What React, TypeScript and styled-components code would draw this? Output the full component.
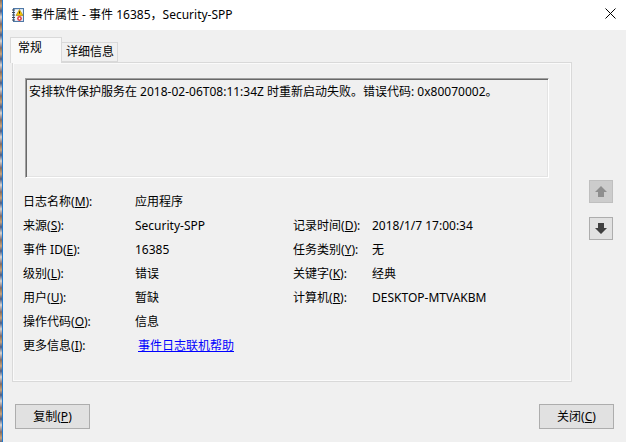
import styled, { createGlobalStyle } from 'styled-components';

const GlobalStyle = createGlobalStyle`
  html, body {
    margin: 0;
    padding: 0;
  }
  body {
    background: #f0f0f0;
    font-family: "Noto Sans", "Noto Sans CJK SC", sans-serif;
    font-size: 12px;
    color: #000;
  }
`;

type Field = {
  label: string;
  key: string;
  value?: string;
  link?: boolean;
};

const leftFields: Field[] = [
  { label: '日志名称', key: 'M', value: '应用程序' },
  { label: '来源', key: 'S', value: 'Security-SPP' },
  { label: '事件 ID', key: 'E', value: '16385' },
  { label: '级别', key: 'L', value: '错误' },
  { label: '用户', key: 'U', value: '暂缺' },
  { label: '操作代码', key: 'O', value: '信息' },
  { label: '更多信息', key: 'I', value: '事件日志联机帮助', link: true },
];

const rightFields: (Field | null)[] = [
  null,
  { label: '记录时间', key: 'D', value: '2018/1/7 17:00:34' },
  { label: '任务类别', key: 'Y', value: '无' },
  { label: '关键字', key: 'K', value: '经典' },
  { label: '计算机', key: 'R', value: 'DESKTOP-MTVAKBM' },
  null,
  null,
];

const Label = ({ f }: { f: Field }) => (
  <>
    {f.label}(<u>{f.key}</u>):
  </>
);

// notebook with a warning triangle and a red badge
const EventIcon = () => (
  <svg width="12" height="14" viewBox="0 0 12 14">
    <rect x="1.5" y="0.5" width="10" height="13" fill="#cfdff0" stroke="#4f78a6" />
    <rect x="3" y="2" width="7.5" height="10.5" fill="#f4f8fc" />
    <path d="M0 2h3M0 4.5h3M0 7h3M0 9.5h3M0 12h3" stroke="#3b4552" strokeWidth="1" />
    <path d="M7.5 1.5 L11 7.5 H4 Z" fill="#f5c400" stroke="#a07a00" strokeWidth="0.6" />
    <path d="M7.5 3.3v2.3" stroke="#3a2a00" strokeWidth="1" />
    <circle cx="7.5" cy="10.5" r="2.4" fill="#e0393e" />
    <circle cx="7.5" cy="10.5" r="0.9" fill="#ffffff" />
  </svg>
);

const CloseIcon = () => (
  <svg width="11" height="11" viewBox="0 0 11 11">
    <path d="M0.5 0.5 L10.5 10.5 M10.5 0.5 L0.5 10.5" stroke="#000" strokeWidth="1" />
  </svg>
);

const Arrow = ({ down, color }: { down?: boolean; color: string }) => (
  <svg width="12" height="11" viewBox="0 0 12 11" style={down ? { transform: 'rotate(180deg)' } : undefined}>
    <path d="M6 0 L12 6 H9 V11 H3 V6 H0 Z" fill={color} />
  </svg>
);

const App = () => {
  return (
    <Screen>
      <GlobalStyle />
      <BehindStrip />
      <Window>
        <TitleBar>
          <EventIcon />
          <Title>事件属性 - 事件 16385，Security-SPP</Title>
          <CloseButton>
            <CloseIcon />
          </CloseButton>
        </TitleBar>
        <Body>
          <TabControl>
            <TabStrip>
              <Tab $active>常规</Tab>
              <Tab>详细信息</Tab>
            </TabStrip>
            <TabPanel>
              <Description>
                安排软件保护服务在 2018-02-06T08:11:34Z 时重新启动失败。错误代码: 0x80070002。
              </Description>
              <FieldGrid>
                {leftFields.map((f, i) => {
                  const r = rightFields[i];
                  return (
                    <FieldRow key={f.key}>
                      <Cell>
                        <Label f={f} />
                      </Cell>
                      <Cell>{f.link ? <HelpLink href="#">{f.value}</HelpLink> : f.value}</Cell>
                      <Cell>{r && <Label f={r} />}</Cell>
                      <Cell>{r?.value}</Cell>
                    </FieldRow>
                  );
                })}
              </FieldGrid>
            </TabPanel>
          </TabControl>
          <SideButtons>
            <ArrowButton $disabled>
              <Arrow color="#8e8e8e" />
            </ArrowButton>
            <ArrowButton>
              <Arrow down color="#3f3f3f" />
            </ArrowButton>
          </SideButtons>
        </Body>
        <Footer>
          <DialogButton>
            复制(<u>P</u>)
          </DialogButton>
          <DialogButton>
            关闭(<u>C</u>)
          </DialogButton>
        </Footer>
      </Window>
    </Screen>
  );
};

const Screen = styled.div`
  display: flex;
  width: 626px;
  height: 442px;
  overflow: hidden;
`;

const BehindStrip = styled.div`
  width: 2px;
  background: repeating-linear-gradient(
    180deg,
    #8a6f5a 0px,
    #c9a27a 6px,
    #4d5f86 11px,
    #d8d2cc 17px,
    #7d6b70 24px
  );
`;

const Window = styled.div`
  flex: 1;
  display: flex;
  flex-direction: column;
  border-left: 1px solid #1f7ad1;
  background: #f0f0f0;
`;

const TitleBar = styled.div`
  height: 30px;
  background: #fff;
  display: flex;
  align-items: center;
  padding: 0 9px 1px 9px;
  box-sizing: border-box;
`;

const Title = styled.div`
  margin-left: 7px;
  font-size: 12px;
  line-height: 16px;
  flex: 1;
  white-space: nowrap;
`;

const CloseButton = styled.div`
  align-self: flex-start;
  margin-top: 8px;
  margin-right: 1px;
  display: flex;
`;

const Body = styled.div`
  display: flex;
  padding: 7px 0 0 9px;
`;

const TabControl = styled.div`
  display: flex;
  flex-direction: column;
  width: 560px;
`;

const TabStrip = styled.div`
  display: flex;
  align-items: flex-end;
  height: 25px;
  margin-left: -2px;
  position: relative;
  z-index: 1;
`;

const Tab = styled.div<{ $active?: boolean }>`
  box-sizing: border-box;
  border: 1px solid #d9d9d9;
  border-bottom: ${({ $active }) => ($active ? 'none' : '1px solid #d9d9d9')};
  background: ${({ $active }) => ($active ? '#f9f9f9' : '#f0f0f0')};
  height: ${({ $active }) => ($active ? '26px' : '20px')};
  margin-bottom: ${({ $active }) => ($active ? '-1px' : '0')};
  width: ${({ $active }) => ($active ? '52px' : '57px')};
  padding: ${({ $active }) => ($active ? '2px 0 0 7px' : '1px 0 0 4px')};
  margin-left: ${({ $active }) => ($active ? '0' : '-1px')};
  line-height: 16px;
  font-size: 12px;
  white-space: nowrap;
`;

const TabPanel = styled.div`
  box-sizing: border-box;
  height: 320px;
  border: 1px solid #d9d9d9;
  box-shadow: inset 0 0 0 1px #fafafa;
  padding: 15px 22px 0 12px;
`;

const Description = styled.div`
  box-sizing: border-box;
  height: 100px;
  border: 1px solid;
  border-color: #a0a0a0 #ffffff #ffffff #a0a0a0;
  box-shadow: inset 1px 1px 0 #696969, inset -1px -1px 0 #e3e3e3;
  padding: 5px 3px;
  line-height: 16px;
  white-space: nowrap;
  overflow: hidden;
`;

const FieldGrid = styled.div`
  margin: 12px 0 0 -2px;
  display: grid;
  grid-template-columns: 112px 158px 79px 1fr;
  grid-auto-rows: 24px;
`;

const FieldRow = styled.div`
  display: contents;
`;

const Cell = styled.div`
  display: flex;
  align-items: center;
  white-space: nowrap;
  line-height: 16px;
`;

const HelpLink = styled.a`
  margin-left: 3px;
  color: #0000ff;
  text-decoration: underline;
`;

const SideButtons = styled.div`
  display: flex;
  flex-direction: column;
  gap: 14px;
  margin: 143px 0 0 17px;
`;

const ArrowButton = styled.div<{ $disabled?: boolean }>`
  box-sizing: border-box;
  width: 24px;
  height: 23px;
  display: flex;
  align-items: center;
  justify-content: center;
  background: ${({ $disabled }) => ($disabled ? '#cccccc' : '#e1e1e1')};
  border: 1px solid ${({ $disabled }) => ($disabled ? '#bfbfbf' : '#adadad')};
`;

const Footer = styled.div`
  display: flex;
  justify-content: space-between;
  padding: 22px 12px 0 12px;
`;

const DialogButton = styled.div`
  box-sizing: border-box;
  width: 75px;
  height: 25px;
  display: flex;
  align-items: center;
  justify-content: center;
  background: #e1e1e1;
  border: 1px solid #adadad;
  font-size: 12px;
  line-height: 16px;
`;

export default App;
